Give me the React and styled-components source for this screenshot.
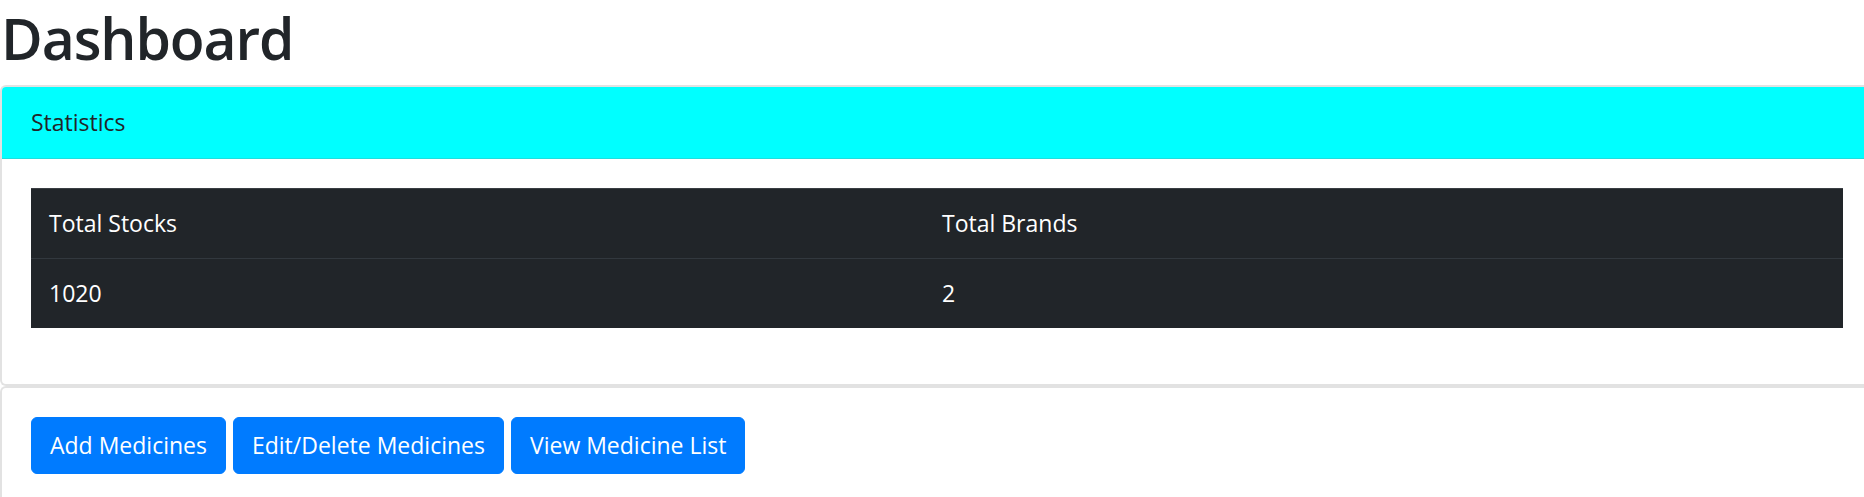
import React from 'react';
import styled, { createGlobalStyle } from 'styled-components';

const GlobalStyle = createGlobalStyle`
  html, body {
    margin: 0;
    padding: 0;
    overflow: hidden;
    background: #fff;
  }
  body {
    font-family: "Open Sans", "Noto Sans", "Liberation Sans", sans-serif;
    font-size: 24px;
    color: #212529;
  }
`

const Page = styled.div`
  width: 1876px;
`

const Title = styled.h1`
  margin: 0 0 13px 0;
  padding: 2px 0 0 1px;
  height: 70px;
  font-size: 57px;
  font-weight: 600;
  line-height: 72px;
  letter-spacing: -1.1px;
  color: #212529;
`

const Card = styled.div`
  display: flex;
  flex-direction: column;
  border: 2px solid #e2e2e2;
  border-right: none;
  border-radius: 6px 0 0 6px;
  background: #fff;
`

const CardHeader = styled.div`
  background: ${props => props.background || '#f7f7f7'};
  padding: 18px 29px;
  line-height: 35px;
  font-size: 23px;
  border-bottom: 1px solid #1fdede;
  border-radius: 4px 0 0 0;
`

const CardBody = styled.div`
  padding: 29px 31px ${props => props.bottom || 29}px 29px;
`

const Table = styled.table`
  width: 1812px;
  border-collapse: collapse;
  background: #212529;
  color: #fff;
  margin-bottom: 26px;
  table-layout: fixed;
`

const Cell = styled.td`
  padding: 17px 18px 18px 18px;
  line-height: 34px;
  font-size: 23px;
  border-top: 1px solid ${props => props.top ? '#3a3e43' : '#32383e'};
  text-align: left;
  font-weight: 400;
`

const HeadCell = styled(Cell).attrs({ as: 'th' })``

const Buttons = styled.div`
  display: flex;
  gap: 7px;
`

const Button = styled.button`
  font-family: inherit;
  font-size: 23px;
  line-height: 37px;
  padding: 9px 18px;
  color: #fff;
  background: #007bff;
  border: 1px solid #007bff;
  border-radius: 6px;
  cursor: pointer;
  &:hover {
    background: #0069d9;
  }
`

export default function App() {
  const buttons = ['Add Medicines', 'Edit/Delete Medicines', 'View Medicine List'];
  return (
    <Page>
      <GlobalStyle />
      <Title>Dashboard</Title>
      <Card>
        <CardHeader background="#00ffff">Statistics</CardHeader>
        <CardBody bottom={30}>
          <Table>
            <colgroup>
              <col style={{ width: 893 }} />
              <col />
            </colgroup>
            <thead>
              <tr>
                <HeadCell top>Total Stocks</HeadCell>
                <HeadCell top>Total Brands</HeadCell>
              </tr>
            </thead>
            <tbody>
              <tr>
                <Cell>1020</Cell>
                <Cell>2</Cell>
              </tr>
            </tbody>
          </Table>
        </CardBody>
      </Card>
      <Card>
        <CardBody>
          <Buttons>
            {buttons.map(label => (
              <Button key={label}>{label}</Button>
            ))}
          </Buttons>
        </CardBody>
      </Card>
    </Page>
  );
}
